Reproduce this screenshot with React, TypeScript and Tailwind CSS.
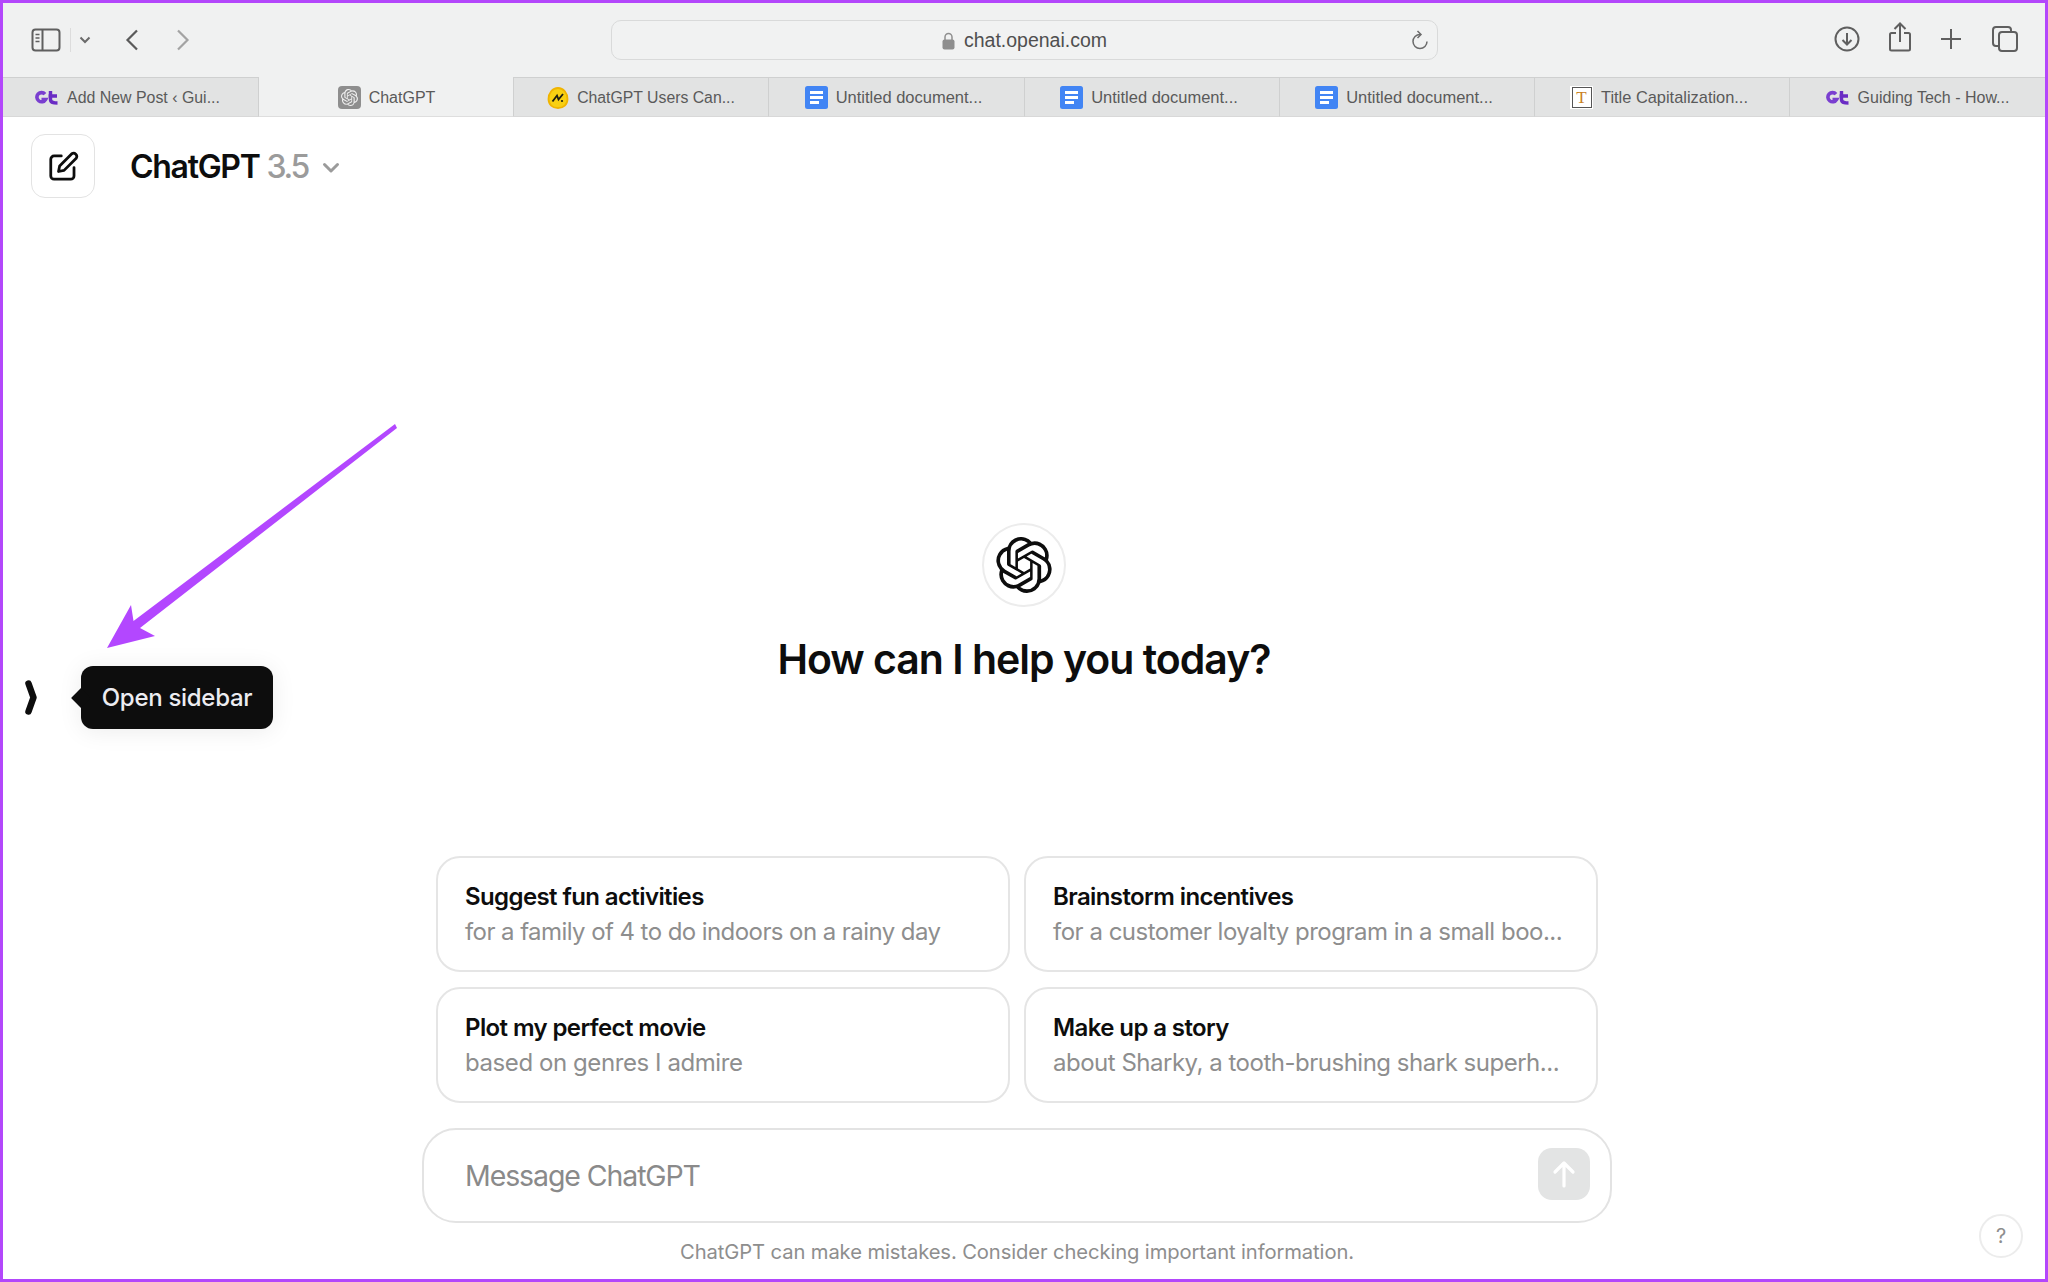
import { SiOpenai } from "react-icons/si";

const ui = "font-['Inter',sans-serif]";

function GtIcon() {
  return (
    <svg width="24" height="16" viewBox="0 0 24 16" className="shrink-0">
      <path d="M10 4.200A4.600 4.600 0 1 0 10.500 9.500H6.500" fill="none" stroke="#7a3fd0" strokeWidth="3.600" />
      <path d="M15.500 1V9.500C15.500 12.500 18 13 22.500 13M13.500 6H22" fill="none" stroke="#6a2cc4" strokeWidth="3.400" />
    </svg>
  );
}

function DocIcon() {
  return (
    <svg width="23" height="23" viewBox="0 0 23 23" className="shrink-0">
      <rect width="23" height="23" rx="2.500" fill="#4285f4" />
      <rect x="5" y="5" width="13" height="3" fill="#fff" />
      <rect x="5" y="10" width="13" height="3" fill="#fff" />
      <rect x="5" y="15" width="9" height="3" fill="#fff" />
    </svg>
  );
}

function GptFav() {
  return (
    <span className="w-[23px] h-[23px] rounded-[4px] bg-[#8e8e8e] flex items-center justify-center shrink-0">
      <SiOpenai className="w-[17px] h-[17px] text-[#f0f0f0]" />
    </span>
  );
}

function YellowIcon() {
  return (
    <svg width="22" height="22" viewBox="0 0 22 22" className="shrink-0">
      <path d="M11 1C16.500 1 20.500 6 20.500 12C20.500 17.500 16.500 21 11 21C5.500 21 1.500 17.500 1.500 12C1.500 6 5.500 1 11 1Z" fill="#f8d012" stroke="#f0b400" strokeWidth="1.800" />
      <path d="M5.500 14.500L10 8.500L11.500 12.500L16 7" fill="none" stroke="#1e1e10" strokeWidth="1.800" />
      <circle cx="15" cy="14" r="1.100" fill="#1e1e10" />
    </svg>
  );
}

function TitleIcon() {
  return (
    <span className="w-[23px] h-[23px] bg-white flex items-center justify-center shrink-0">
      <span className="w-[20px] h-[21px] border border-[#555] flex items-center justify-center font-['Liberation_Serif',serif] text-[17px] leading-none text-[#c9801f]">T</span>
    </span>
  );
}

const tabs = [
  { icon: <GtIcon />, label: "Add New Post ‹ Gui...", w: "w-[256px] pr-[6px] pt-[1px]", t: "text-[15.900px]" },
  { icon: <GptFav />, label: "ChatGPT", w: "w-[255px] pl-[1px] pt-[2px]", t: "text-[16px]", active: true },
  { icon: <YellowIcon />, label: "ChatGPT Users Can...", w: "w-[255px] pt-[1px]", t: "text-[15.800px]" },
  { icon: <DocIcon />, label: "Untitled document...", w: "w-[256px] pr-[6px] pt-[1px]", t: "text-[16.500px]" },
  { icon: <DocIcon />, label: "Untitled document...", w: "w-[255px] pr-[6px] pt-[1px]", t: "text-[16.500px]" },
  { icon: <DocIcon />, label: "Untitled document...", w: "w-[255px] pr-[6px] pt-[1px]", t: "text-[16.500px]" },
  { icon: <TitleIcon />, label: "Title Capitalization...", w: "w-[255px] pr-[6px] pt-[1px]", t: "text-[16.400px]" },
  { icon: <GtIcon />, label: "Guiding Tech - How...", w: "w-[255px] pt-[1px]", t: "text-[16px]" },
];

const cards = [
  ["Suggest fun activities", "for a family of 4 to do indoors on a rainy day", "tracking-[-0.570px]"],
  ["Brainstorm incentives", "for a customer loyalty program in a small boo...", "tracking-[-0.490px]"],
  ["Plot my perfect movie", "based on genres I admire", "tracking-[-0.420px]"],
  ["Make up a story", "about Sharky, a tooth-brushing shark superh...", "tracking-[-0.490px]"],
];

export default function App() {
  return (
    <div className="relative w-[2048px] h-[1282px] overflow-hidden bg-white border-[3px] border-[#b347fb] flex flex-col">
      {/* Toolbar */}
      <div className="h-[74px] shrink-0 bg-[#f0f1f1] flex items-center relative">
        <div className="flex items-center ml-[28px]">
          <svg width="30" height="24" viewBox="0 0 30 24" fill="none" stroke="#5f5f5f" strokeWidth="2">
            <rect x="1.500" y="1.500" width="27" height="21" rx="3" />
            <path d="M11.500 1.500V22.500" />
            <path d="M4.500 6.500H8.500M4.500 10H8.500M4.500 13.500H8.500" strokeWidth="1.500" />
          </svg>
          <span className="w-px h-[24px] bg-[#dcdcdc] ml-[9px]" />
          <svg width="12" height="8" viewBox="0 0 12 8" fill="none" stroke="#6a6a6a" strokeWidth="2" className="ml-[8px]">
            <path d="M1.500 1.500L6 6L10.500 1.500" />
          </svg>
          <svg width="14" height="22" viewBox="0 0 14 22" fill="none" stroke="#5a5a5a" strokeWidth="2.200" className="ml-[34px]">
            <path d="M12 1.500L2.500 11L12 20.500" />
          </svg>
          <svg width="14" height="22" viewBox="0 0 14 22" fill="none" stroke="#a3a3a3" strokeWidth="2.200" className="ml-[37px]">
            <path d="M2 1.500L11.500 11L2 20.500" />
          </svg>
        </div>
        <div className="absolute left-[608px] top-[17px] w-[827px] h-[40px] rounded-[10px] border border-[#d9dada] bg-[#f1f2f2] flex items-center justify-center pt-[1px]">
          <svg width="13" height="18" viewBox="0 0 13 18" className="mr-[9px]">
            <path d="M3 8V5a3.500 3.500 0 0 1 7 0v3" fill="none" stroke="#8e8e8e" strokeWidth="1.500" />
            <rect x="0.500" y="7.500" width="12" height="10" rx="2" fill="#8e8e8e" />
          </svg>
          <span className="font-['Liberation_Sans',sans-serif] text-[19.500px] leading-none text-[#4f4f4f]">chat.openai.com</span>
          <svg width="18" height="22" viewBox="0 0 18 22" fill="none" stroke="#6b6b6b" strokeWidth="1.500" className="absolute right-[8px] top-[9px]">
            <path d="M9 4.500A7 7 0 1 0 16 11.500" />
            <path d="M6.500 1L10 4.500L6.500 8" />
          </svg>
        </div>
        <div className="ml-auto mr-[27px] mt-[-2px] flex items-center">
          <svg width="26" height="26" viewBox="0 0 26 26" fill="none" stroke="#5f5f5f" strokeWidth="2">
            <circle cx="13" cy="13" r="11.500" />
            <path d="M13 7V18.500M8.500 14L13 18.500L17.500 14" />
          </svg>
          <svg width="22" height="30" viewBox="0 0 22 30" fill="none" stroke="#5f5f5f" strokeWidth="2" className="ml-[29px] mb-[4px]">
            <path d="M7 11H2.500A1.500 1.500 0 0 0 1 12.500V27A1.500 1.500 0 0 0 2.500 28.500H19.500A1.500 1.500 0 0 0 21 27V12.500A1.500 1.500 0 0 0 19.500 11H15" />
            <path d="M11 20V2M5.500 7L11 1.500L16.500 7" />
          </svg>
          <svg width="20" height="20" viewBox="0 0 20 20" fill="none" stroke="#5f5f5f" strokeWidth="2" className="ml-[30px]">
            <path d="M10 0V20M0 10H20" />
          </svg>
          <svg width="26" height="26" viewBox="0 0 26 26" fill="none" stroke="#5f5f5f" strokeWidth="2" className="ml-[31px]">
            <rect x="7" y="6" width="18" height="19" rx="3" />
            <path d="M7 20H4A3 3 0 0 1 1 17V4A3 3 0 0 1 4 1H16A3 3 0 0 1 19 4V6" />
          </svg>
        </div>
      </div>

      {/* Tabs */}
      <div className="h-[40px] shrink-0 flex font-['Liberation_Sans',sans-serif] text-[#5a5a5a]">
        {tabs.map((t, i) => (
          <div
            key={i}
            className={
              t.w +
              " " +
              t.t +
              " flex items-center justify-center gap-[8px] border-t border-[#cfd0d0] border-b " +
              (t.active ? "bg-[#f0f1f1] border-t-0 border-b-[#dedede]" : "bg-[#e2e3e3] border-b-[#d8d8d8]") +
              (i < tabs.length - 1 ? " border-r border-r-[#cfd0d0]" : "")
            }
          >
            {t.icon}
            <span className="whitespace-nowrap">{t.label}</span>
          </div>
        ))}
      </div>

      {/* Page */}
      <div className={ui + " flex-1 flex flex-col text-[#0d0d0d]"}>
        <div className="flex items-center ml-[28px] mt-[17px] h-[64px] shrink-0">
          <div className="w-[64px] h-[64px] rounded-[14px] border border-[#e3e3e3] flex items-center justify-center">
            <svg width="31" height="31" viewBox="0 0 28 28" fill="none" stroke="#0d0d0d" strokeWidth="2.500" strokeLinecap="round" strokeLinejoin="round">
              <path d="M12 4.500H5.500A3 3 0 0 0 2.500 7.500V22.500A3 3 0 0 0 5.500 25.500H20.500A3 3 0 0 0 23.500 22.500V15" />
              <path d="M21.500 2.500A2.900 2.900 0 0 1 25.500 6.500L14.500 17.500L9.500 18.500L10.500 13.500Z" />
            </svg>
          </div>
          <div className="ml-[35px] mt-[2px] flex items-center text-[32px] leading-none font-semibold tracking-[-1.300px]">
            ChatGPT
            <span className="ml-[7px] text-[#9b9b9b] font-medium tracking-[-2.300px]">3.5</span>
            <svg width="18" height="12" viewBox="0 0 18 12" fill="none" stroke="#9b9b9b" strokeWidth="3" strokeLinecap="round" strokeLinejoin="round" className="ml-[14px] mt-[2px]">
              <path d="M2.500 2.500L9 9L15.500 2.500" />
            </svg>
          </div>
        </div>

        <div className="mt-[325px] w-[84px] h-[84px] mx-auto rounded-full border-2 border-[#ececec] flex items-center justify-center shrink-0">
          <SiOpenai className="w-[56px] h-[56px] text-[#0d0d0d]" />
        </div>
        <h1 className="mt-[22px] h-[60px] text-center text-[41px] leading-[60px] font-semibold tracking-[-1px]">How can I help you today?</h1>

        <div className="mt-[167px] w-[1190px] ml-[419px] shrink-0">
          <div className="mx-[14px] grid grid-cols-2 gap-x-[14px] gap-y-[15px]">
            {cards.map(([a, b, tr]) => (
              <div key={a} className="h-[116px] rounded-[24px] border-2 border-[#e5e5e5] pl-[27px] flex flex-col justify-center">
                <div className="text-[24px] leading-[35px] font-semibold tracking-[-0.600px] whitespace-nowrap">{a}</div>
                <div className={"text-[24px] leading-[36px] text-[#8e8e8e] whitespace-nowrap " + tr}>{b}</div>
              </div>
            ))}
          </div>
          <div className="mt-[25px] h-[95px] rounded-[34px] border-2 border-[#e3e3e3] flex items-center pl-[41px] pr-[20px]">
            <span className="text-[28.500px] text-[#8a8a8a] tracking-[-1.100px] pt-[2px]">Message ChatGPT</span>
            <div className="ml-auto w-[52px] h-[52px] rounded-[14px] bg-[#e3e4e4] flex items-center justify-center mb-[4px]">
              <svg width="24" height="30" viewBox="0 0 24 30" fill="none" stroke="#fff" strokeWidth="3.200" strokeLinecap="round" strokeLinejoin="round">
                <path d="M12 27V4M3 13L12 4L21 13" />
              </svg>
            </div>
          </div>
          <div className="mt-[15px] text-center text-[20.200px] leading-[28px] text-[#8e8e8e] tracking-[-0.100px] whitespace-nowrap">
            ChatGPT can make mistakes. Consider checking important information.
          </div>
        </div>
      </div>

      {/* Overlays */}
      <div className={ui + " absolute left-[78px] top-[663px] w-[192px] h-[63px] rounded-[12px] bg-[#0d0d0d] shadow-[0_2px_24px_rgba(0,0,0,0.08)] flex items-center justify-center text-[24px] font-medium text-[#ececf1] tracking-[-0.300px] pt-[1px]"}>
        <span className="absolute left-[-7px] top-[25px] w-[14px] h-[14px] bg-[#0d0d0d] rotate-45" />
        <span className="relative">Open sidebar</span>
      </div>
      <svg width="16" height="40" viewBox="0 0 16 40" fill="none" stroke="#0d0d0d" strokeWidth="6.500" strokeLinecap="round" strokeLinejoin="round" className="absolute left-[21px] top-[675px]">
        <path d="M4.500 5.500L9.500 19.500L4.500 33.500" />
      </svg>
      <svg width="300" height="230" viewBox="100 420 300 230" className="absolute left-[97px] top-[417px]">
        <polygon points="107,648 131,605 133.500,621 395,424 397,428 140,628 155,636" fill="#b347ff" />
      </svg>
      <div className={ui + " absolute left-[1976px] top-[1211px] w-[44px] h-[44px] rounded-full border-2 border-[#ececec] flex items-center justify-center text-[20px] text-[#8e8e8e]"}>?</div>
    </div>
  );
}
